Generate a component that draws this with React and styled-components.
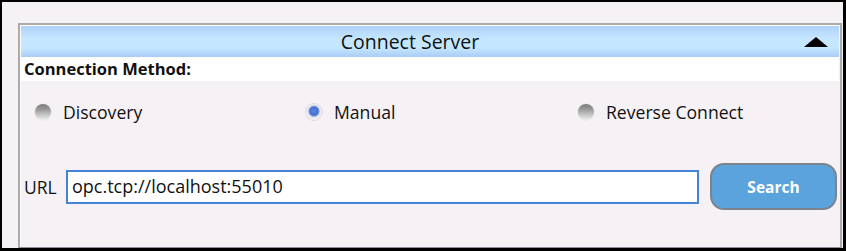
import React from 'react'
import styled, { createGlobalStyle } from 'styled-components'

const Global = createGlobalStyle`
  html, body {
    margin: 0;
    padding: 0;
    background: #f6f1f5;
  }
  * {
    box-sizing: border-box;
  }
`

const Frame = styled.div`
  width: 846px;
  height: 251px;
  border: 2px solid #000;
  border-right-width: 3px;
  border-bottom-width: 3px;
  padding: 21px 1px 0 16px;
  background: #f6f1f5;
  font-family: 'Open Sans', 'Noto Sans', sans-serif;
  color: #111;
`

const Panel = styled.section`
  height: 225px;
  border: 2px solid #ababab;
  border-bottom-width: 1px;
  border-bottom-color: #8f8f99;
  padding: 1px;
  box-shadow: inset 1px 1px 0 #fff;
  display: flex;
  flex-direction: column;
`

const Header = styled.div`
  height: 31px;
  display: grid;
  grid-template-columns: 1fr 40px;
  align-items: center;
  background: linear-gradient(#b0d0fa 0%, #c4e6ff 40%, #c4e8ff 70%, #a9cbf6 100%);
`

const Title = styled.div`
  text-align: center;
  font-size: 19.5px;
  line-height: 31px;
`

const Caret = styled.svg`
  display: block;
  margin-left: 5px;
`

const MethodBar = styled.div`
  height: 24px;
  background: #fff;
  padding-left: 3px;
  font-size: 16.5px;
  font-weight: 700;
  line-height: 24px;
`

const Body = styled.div`
  display: flex;
  flex-direction: column;
  padding-left: 14px;
`

const RadioRow = styled.div`
  margin-top: 16px;
  height: 30px;
  display: grid;
  grid-template-columns: 271px 272px 1fr;
  align-items: center;
`

const Option = styled.label`
  display: flex;
  align-items: center;
  gap: 12px;
  font-size: 17.6px;
`

const Dot = styled.span`
  width: 16px;
  height: 16px;
  border-radius: 50%;
  flex: none;
  background: ${p =>
    p.checked
      ? 'radial-gradient(circle at 50% 45%, #5b86e0 0, #4470d4 4px, #7f9fe0 5px, #e6e4ea 6px, #f2eff3 8px)'
      : 'linear-gradient(#7e7e7e 0%, #959595 30%, #c2c2c2 65%, #ececec 100%)'};
  box-shadow: ${p => (p.checked ? '0 0 0 1px #dcd9de' : '0 0 0 1px #ebe8ec')};
`

const UrlRow = styled.div`
  margin-top: 36px;
  height: 47px;
  display: flex;
  align-items: center;
  margin-left: -11px;
`

const UrlLabel = styled.span`
  font-size: 17.5px;
  width: 42px;
`

const UrlInput = styled.div`
  width: 633px;
  height: 34px;
  border: 2px solid #4384d8;
  background: #fff;
  padding-left: 4px;
  font-size: 18px;
  line-height: 29px;
`

const SearchButton = styled.button`
  margin-left: 11px;
  width: 127px;
  height: 47px;
  border: 2px solid #7d838c;
  border-radius: 14px;
  background: #5ba3dd;
  color: #fff;
  font-family: 'Open Sans', 'Noto Sans', sans-serif;
  font-size: 15.5px;
  font-weight: 700;
  padding: 0;
`

const options = [
  { label: 'Discovery', checked: false },
  { label: 'Manual', checked: true },
  { label: 'Reverse Connect', checked: false },
]

export default function App() {
  return (
    <>
      <Global />
      <Frame>
        <Panel>
          <Header>
            <Title>Connect Server</Title>
            <Caret width="24" height="10" viewBox="0 0 24 10">
              <polygon points="12,0 24,10 0,10" fill="#000" />
            </Caret>
          </Header>
          <MethodBar>Connection Method:</MethodBar>
          <Body>
            <RadioRow>
              {options.map(o => (
                <Option key={o.label}>
                  <Dot checked={o.checked} />
                  {o.label}
                </Option>
              ))}
            </RadioRow>
            <UrlRow>
              <UrlLabel>URL</UrlLabel>
              <UrlInput>opc.tcp://localhost:55010</UrlInput>
              <SearchButton>Search</SearchButton>
            </UrlRow>
          </Body>
        </Panel>
      </Frame>
    </>
  )
}
